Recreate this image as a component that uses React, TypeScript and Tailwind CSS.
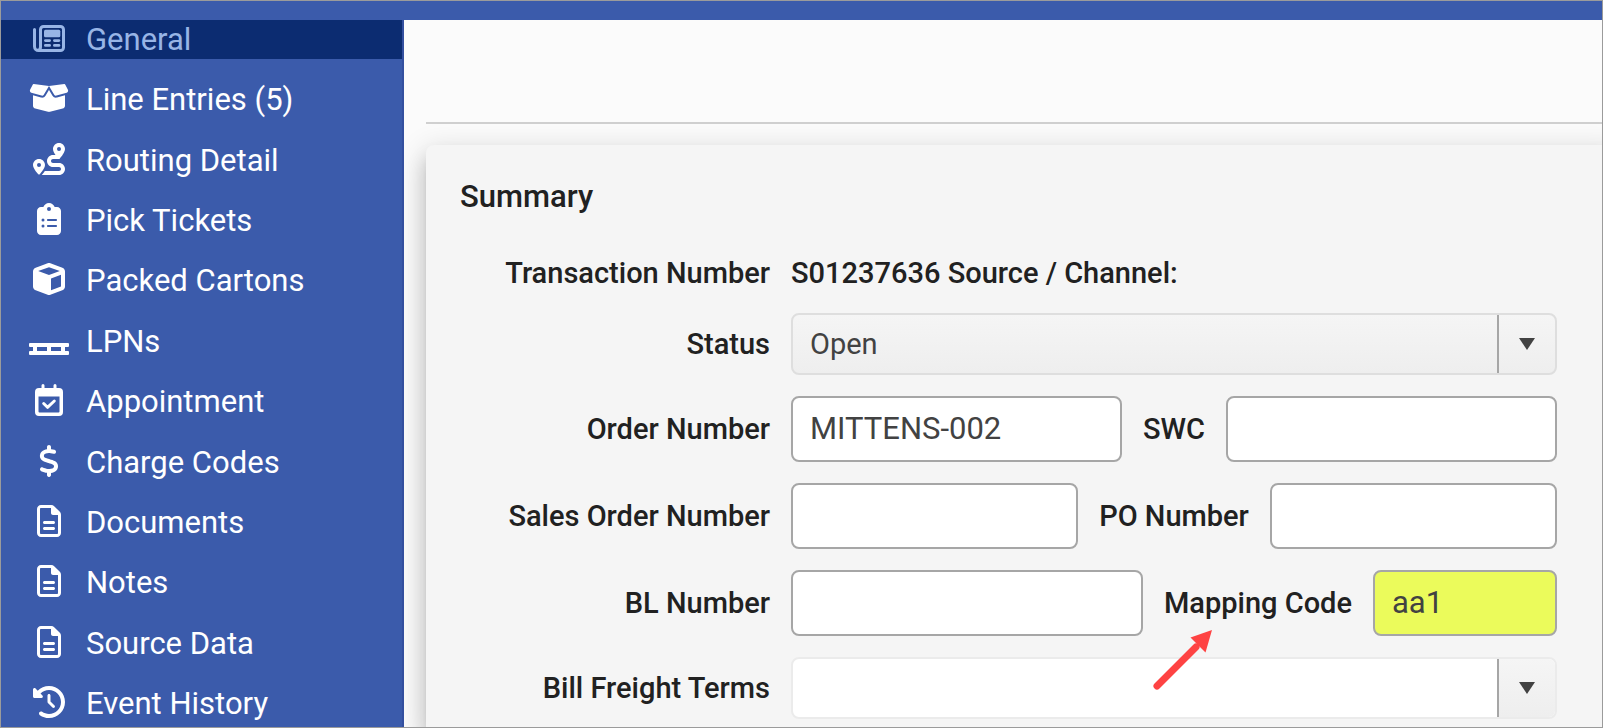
import type { ComponentType, ReactNode } from "react";
import {
  FaBoxOpen,
  FaClipboardList,
  FaClockRotateLeft,
  FaCube,
  FaDollarSign,
  FaRegFileLines,
  FaRoute,
} from "react-icons/fa6";

type IconType = ComponentType<{ className?: string }>;

function PalletIcon({ className }: { className?: string }) {
  return (
    <svg viewBox="0 0 40 32" className={className} fill="currentColor" aria-hidden="true">
      <path
        fillRule="evenodd"
        d="M1 19h38a1 1 0 0 1 1 1v2a1 1 0 0 1-1 1h-3v4h3a1 1 0 0 1 1 1v2a1 1 0 0 1-1 1H1a1 1 0 0 1-1-1v-2a1 1 0 0 1 1-1h3v-4H1a1 1 0 0 1-1-1v-2a1 1 0 0 1 1-1zM8 23v4h10v-4zM22 23v4h10v-4z"
      />
    </svg>
  );
}

function NewspaperIcon({ className }: { className?: string }) {
  return (
    <svg viewBox="0 -3 32 32" className={className} fill="currentColor" aria-hidden="true">
      <path
        d="M1.500 4.500V21.500a4 4 0 0 0 4 4H27.500a3 3 0 0 0 3-3V4.500a3 3 0 0 0-3-3H10.500a3 3 0 0 0-3 3V22a3.500 3.500 0 0 1-3 3.500"
        fill="none"
        stroke="currentColor"
        strokeWidth="3"
        strokeLinecap="round"
      />
      <rect x="11" y="4.700" width="16.300" height="7.600" rx="1.500" />
      <rect x="11" y="14.200" width="7" height="2.800" rx="1.400" />
      <rect x="20" y="14.200" width="7.300" height="2.800" rx="1.400" />
      <rect x="11" y="19" width="7" height="2.800" rx="1.400" />
      <rect x="20" y="19" width="7.300" height="2.800" rx="1.400" />
    </svg>
  );
}

function CalendarIcon({ className }: { className?: string }) {
  return (
    <svg viewBox="0 0 28 32" className={className} fill="currentColor" aria-hidden="true">
      <path
        fillRule="evenodd"
        d="M8 0a1.500 1.500 0 0 1 1.500 1.500V4h9V1.500a1.500 1.500 0 0 1 3 0V4H24a4 4 0 0 1 4 4v20a4 4 0 0 1-4 4H4a4 4 0 0 1-4-4V8a4 4 0 0 1 4-4h2.500V1.500A1.500 1.500 0 0 1 8 0zM3.500 12.500V27.500a1 1 0 0 0 1 1h19a1 1 0 0 0 1-1V12.500z"
      />
      <path
        d="M8.700 19.500 12.500 23.300 19.300 17"
        fill="none"
        stroke="currentColor"
        strokeWidth="3"
        strokeLinecap="round"
        strokeLinejoin="round"
      />
    </svg>
  );
}

const items: { label: string; icon: IconType; active?: boolean }[] = [
  { label: "General", icon: NewspaperIcon, active: true },
  { label: "Line Entries (5)", icon: FaBoxOpen },
  { label: "Routing Detail", icon: FaRoute },
  { label: "Pick Tickets", icon: FaClipboardList },
  { label: "Packed Cartons", icon: FaCube },
  { label: "LPNs", icon: PalletIcon },
  { label: "Appointment", icon: CalendarIcon },
  { label: "Charge Codes", icon: FaDollarSign },
  { label: "Documents", icon: FaRegFileLines },
  { label: "Notes", icon: FaRegFileLines },
  { label: "Source Data", icon: FaRegFileLines },
  { label: "Event History", icon: FaClockRotateLeft },
];

function Sidebar() {
  return (
    <nav className="flex w-[403px] shrink-0 flex-col justify-between border-r-2 border-[#34509f] bg-[#3b5bab] pb-1">
      {items.map(({ label, icon: Icon, active }) => (
        <a
          key={label}
          href="#"
          aria-current={active ? "page" : undefined}
          className={
            "flex h-[39px] items-center gap-[17px] pl-7 text-[31px] leading-[39px] whitespace-nowrap " +
            (active ? "bg-[#0c2c71] text-[#98b5e6]" : "text-white")
          }
        >
          <Icon className="mb-[3px] h-8 w-10 shrink-0" />
          {label}
        </a>
      ))}
    </nav>
  );
}

function Row({ label, id, children }: { label: string; id?: string; children: ReactNode }) {
  return (
    <div className="flex items-center gap-[21px]">
      <label htmlFor={id} className="w-[310px] shrink-0 text-right">
        {label}
      </label>
      {children}
    </div>
  );
}

function TextBox({ id, value = "", className = "" }: { id: string; value?: string; className?: string }) {
  return (
    <input
      id={id}
      type="text"
      defaultValue={value}
      className={
        "h-[66px] min-w-0 rounded-lg border-2 border-[#a6a6a6] px-[17px] pb-0.5 text-[31px] font-normal text-[#424242] outline-none " +
        (className || "flex-1 bg-white")
      }
    />
  );
}

function DropDown({ id, options, filled }: { id: string; options: string[]; filled?: boolean }) {
  return (
    <div
      className={
        "grid h-[62px] flex-1 grid-cols-[1fr_58px] overflow-hidden rounded-lg border-2 " +
        (filled ? "border-[#dedede] bg-linear-to-b from-[#f5f5f5] to-[#eeeeee]" : "border-[#ebebeb] bg-white")
      }
    >
      <select
        id={id}
        className="col-span-2 col-start-1 row-start-1 appearance-none bg-transparent px-[17px] text-[29px] font-normal text-[#424242] outline-none"
      >
        {options.map((o) => (
          <option key={o}>{o}</option>
        ))}
      </select>
      <span
        className={
          "pointer-events-none col-start-2 row-start-1 flex items-center justify-center border-l-2 border-[#a6a6a6] " +
          (filled ? "" : "bg-linear-to-b from-[#f5f5f5] to-[#eeeeee]")
        }
      >
        <svg viewBox="0 0 16 12" className="h-3 w-4" aria-hidden="true">
          <path d="M0 0h16L8 12z" fill="#424242" />
        </svg>
      </span>
    </div>
  );
}

export default function App() {
  return (
    <div className="flex min-h-screen flex-col border border-[#9b9b9b] bg-[#fbfbfb] font-['Roboto','Liberation_Sans',sans-serif]">
      <header className="h-[19px] shrink-0 bg-[#3b5bab]" />
      <div className="flex flex-1">
        <Sidebar />
        <main className="flex min-w-0 flex-1 flex-col overflow-hidden pl-[22px]">
          <div className="h-[104px] shrink-0 border-b-2 border-[#d0d0d0]" />
          <section className="-mr-4 mt-[21px] flex-1 rounded-tl-lg bg-[#f5f5f5] pt-[29px] pr-[61px] pb-1 pl-[34px] text-[29px] leading-[38px] font-medium text-[#212121] shadow-[0_10px_10px_-6px_rgba(0,0,0,0.2),0_16px_20px_2px_rgba(0,0,0,0.14),0_6px_28px_4px_rgba(0,0,0,0.12)]">
            <h2 className="mb-[34px] text-[31px] leading-[46px]">Summary</h2>
            <div className="flex flex-col gap-[21px]">
              <Row label="Transaction Number">
                <span className="whitespace-nowrap">S01237636 Source / Channel:</span>
              </Row>
              <Row label="Status" id="status">
                <DropDown id="status" options={["Open"]} filled />
              </Row>
              <Row label="Order Number" id="order">
                <TextBox id="order" value="MITTENS-002" />
                <label htmlFor="swc">SWC</label>
                <TextBox id="swc" />
              </Row>
              <Row label="Sales Order Number" id="sales">
                <TextBox id="sales" />
                <label htmlFor="po">PO Number</label>
                <TextBox id="po" />
              </Row>
              <Row label="BL Number" id="bl">
                <TextBox id="bl" />
                <div className="relative whitespace-nowrap">
                  <label htmlFor="mapping">Mapping Code</label>
                  <svg
                    viewBox="0 0 64 64"
                    className="pointer-events-none absolute top-11 -left-3 h-16 w-16"
                    fill="#fe4343"
                    aria-hidden="true"
                  >
                    <path d="M5 58 44 19" stroke="#fe4343" strokeWidth="7" strokeLinecap="round" />
                    <path d="M60 2 38.500 9.500 53.500 24.500z" />
                  </svg>
                </div>
                <TextBox id="mapping" value="aa1" className="w-[184px] bg-[#ebfb5b]" />
              </Row>
              <Row label="Bill Freight Terms" id="terms">
                <DropDown id="terms" options={[""]} />
              </Row>
            </div>
          </section>
        </main>
      </div>
    </div>
  );
}
